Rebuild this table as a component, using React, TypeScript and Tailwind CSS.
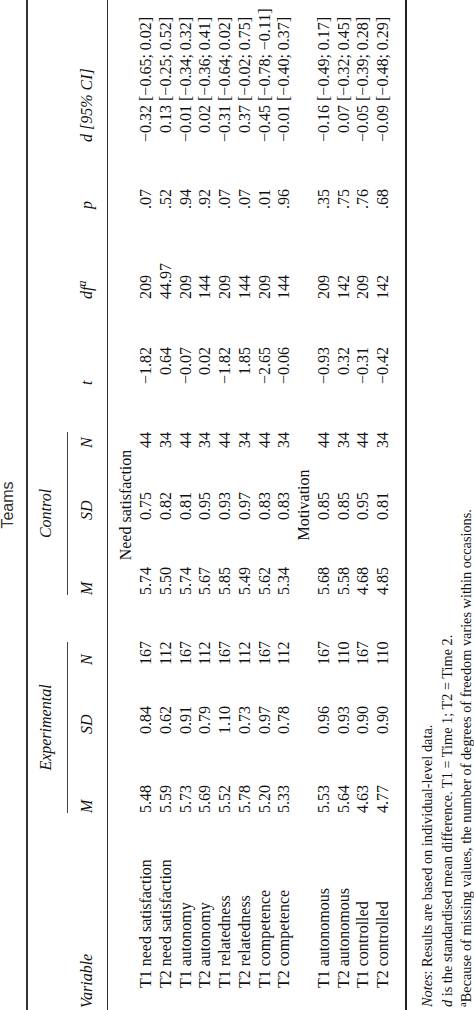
import React from "react";

const GRID =
  "grid grid-cols-[197px_79px_69px_70px_75px_72px_63px_86px_90px_67px_1fr]";

const need: string[][] = [
  ["T1 need satisfaction", "5.48", "0.84", "167", "5.74", "0.75", "44", "−1.82", "209", ".07", "−0.32", "[−0.65; 0.02]"],
  ["T2 need satisfaction", "5.59", "0.62", "112", "5.50", "0.82", "34", "0.64", "44.97", ".52", "0.13", "[−0.25; 0.52]"],
  ["T1 autonomy", "5.73", "0.91", "167", "5.74", "0.81", "44", "−0.07", "209", ".94", "−0.01", "[−0.34; 0.32]"],
  ["T2 autonomy", "5.69", "0.79", "112", "5.67", "0.95", "34", "0.02", "144", ".92", "0.02", "[−0.36; 0.41]"],
  ["T1 relatedness", "5.52", "1.10", "167", "5.85", "0.93", "44", "−1.82", "209", ".07", "−0.31", "[−0.64; 0.02]"],
  ["T2 relatedness", "5.78", "0.73", "112", "5.49", "0.97", "34", "1.85", "144", ".07", "0.37", "[−0.02; 0.75]"],
  ["T1 competence", "5.20", "0.97", "167", "5.62", "0.83", "44", "−2.65", "209", ".01", "−0.45", "[−0.78; −0.11]"],
  ["T2 competence", "5.33", "0.78", "112", "5.34", "0.83", "34", "−0.06", "144", ".96", "−0.01", "[−0.40; 0.37]"],
];

const motivation: string[][] = [
  ["T1 autonomous", "5.53", "0.96", "167", "5.68", "0.85", "44", "−0.93", "209", ".35", "−0.16", "[−0.49; 0.17]"],
  ["T2 autonomous", "5.64", "0.93", "110", "5.58", "0.85", "34", "0.32", "142", ".75", "0.07", "[−0.32; 0.45]"],
  ["T1 controlled", "4.63", "0.90", "167", "4.68", "0.95", "44", "−0.31", "209", ".76", "−0.05", "[−0.39; 0.28]"],
  ["T2 controlled", "4.77", "0.90", "110", "4.85", "0.81", "34", "−0.42", "142", ".68", "−0.09", "[−0.48; 0.29]"],
];

function DataRow({ r }: { r: string[] }) {
  const [v, em, esd, en, cm, csd, cn, t, df, p, d, ci] = r;
  return (
    <div className={GRID}>
      <div className="pl-[22px] whitespace-nowrap">{v}</div>
      <div>{em}</div>
      <div>{esd}</div>
      <div>{en}</div>
      <div>{cm}</div>
      <div>{csd}</div>
      <div>{cn}</div>
      <div>
        <span className="inline-block w-[38px] text-right">{t}</span>
      </div>
      <div>{df}</div>
      <div>{p}</div>
      <div className="whitespace-nowrap">
        {d.startsWith("−") ? (
          d
        ) : (
          <>
            <span className="invisible">−</span>
            {d}
          </>
        )}{" "}
        {ci}
      </div>
    </div>
  );
}

function Heading({ children }: { children: React.ReactNode }) {
  return <div className="text-center whitespace-nowrap">{children}</div>;
}

export default function App() {
  return (
    <div className="w-[474px] h-[1010px] overflow-hidden bg-white">
      <div className="w-[1010px] h-[474px] origin-top-left -rotate-90 translate-y-[1010px] font-['Liberation_Serif','Times_New_Roman',serif] text-[#111] text-[16px]">
        <div className="h-[26px] text-center font-['Liberation_Sans',Arial,sans-serif] text-[16px] leading-[16px] text-[#333]">
          Teams
        </div>
        <div className="border-t-2 border-[#333]" />
        <div className={GRID + " leading-[20px] italic"}>
          <div />
          <div className="col-span-3 mr-[47px] pt-[7.6px] pb-[11.4px] border-b border-[#444] text-center">
            Experimental
          </div>
          <div className="col-span-3 mr-[47px] pt-[7.6px] pb-[11.4px] border-b border-[#444] text-center">
            Control
          </div>
        </div>
        <div className={GRID + " leading-[20px] italic pt-[8.6px] pb-[10.4px]"}>
          <div className="pl-[2px]">Variable</div>
          <div>M</div>
          <div>SD</div>
          <div>N</div>
          <div>M</div>
          <div>SD</div>
          <div>N</div>
          <div>t</div>
          <div>
            df<sup>a</sup>
          </div>
          <div>p</div>
          <div className="whitespace-nowrap">d [95% CI]</div>
        </div>
        <div className="border-t border-[#333]" />
        <div className="leading-[19.75px] pt-[8.5px] pb-[12px]">
          <Heading>Need satisfaction</Heading>
          {need.map((r) => (
            <DataRow key={r[0]} r={r} />
          ))}
          <Heading>Motivation</Heading>
          {motivation.map((r) => (
            <DataRow key={r[0]} r={r} />
          ))}
        </div>
        <div className="border-t-2 border-[#222]" />
        <div className="pt-[11.4px] pl-[3px] text-[14.3px] leading-[19.5px] whitespace-nowrap">
          <div>
            <i>Notes</i>: Results are based on individual-level data.
          </div>
          <div>
            <i>d</i> is the standardised mean difference. T1 = Time 1; T2 = Time 2.
          </div>
          <div>
            <sup>a</sup>Because of missing values, the number of degrees of freedom varies within occasions.
          </div>
        </div>
      </div>
    </div>
  );
}
